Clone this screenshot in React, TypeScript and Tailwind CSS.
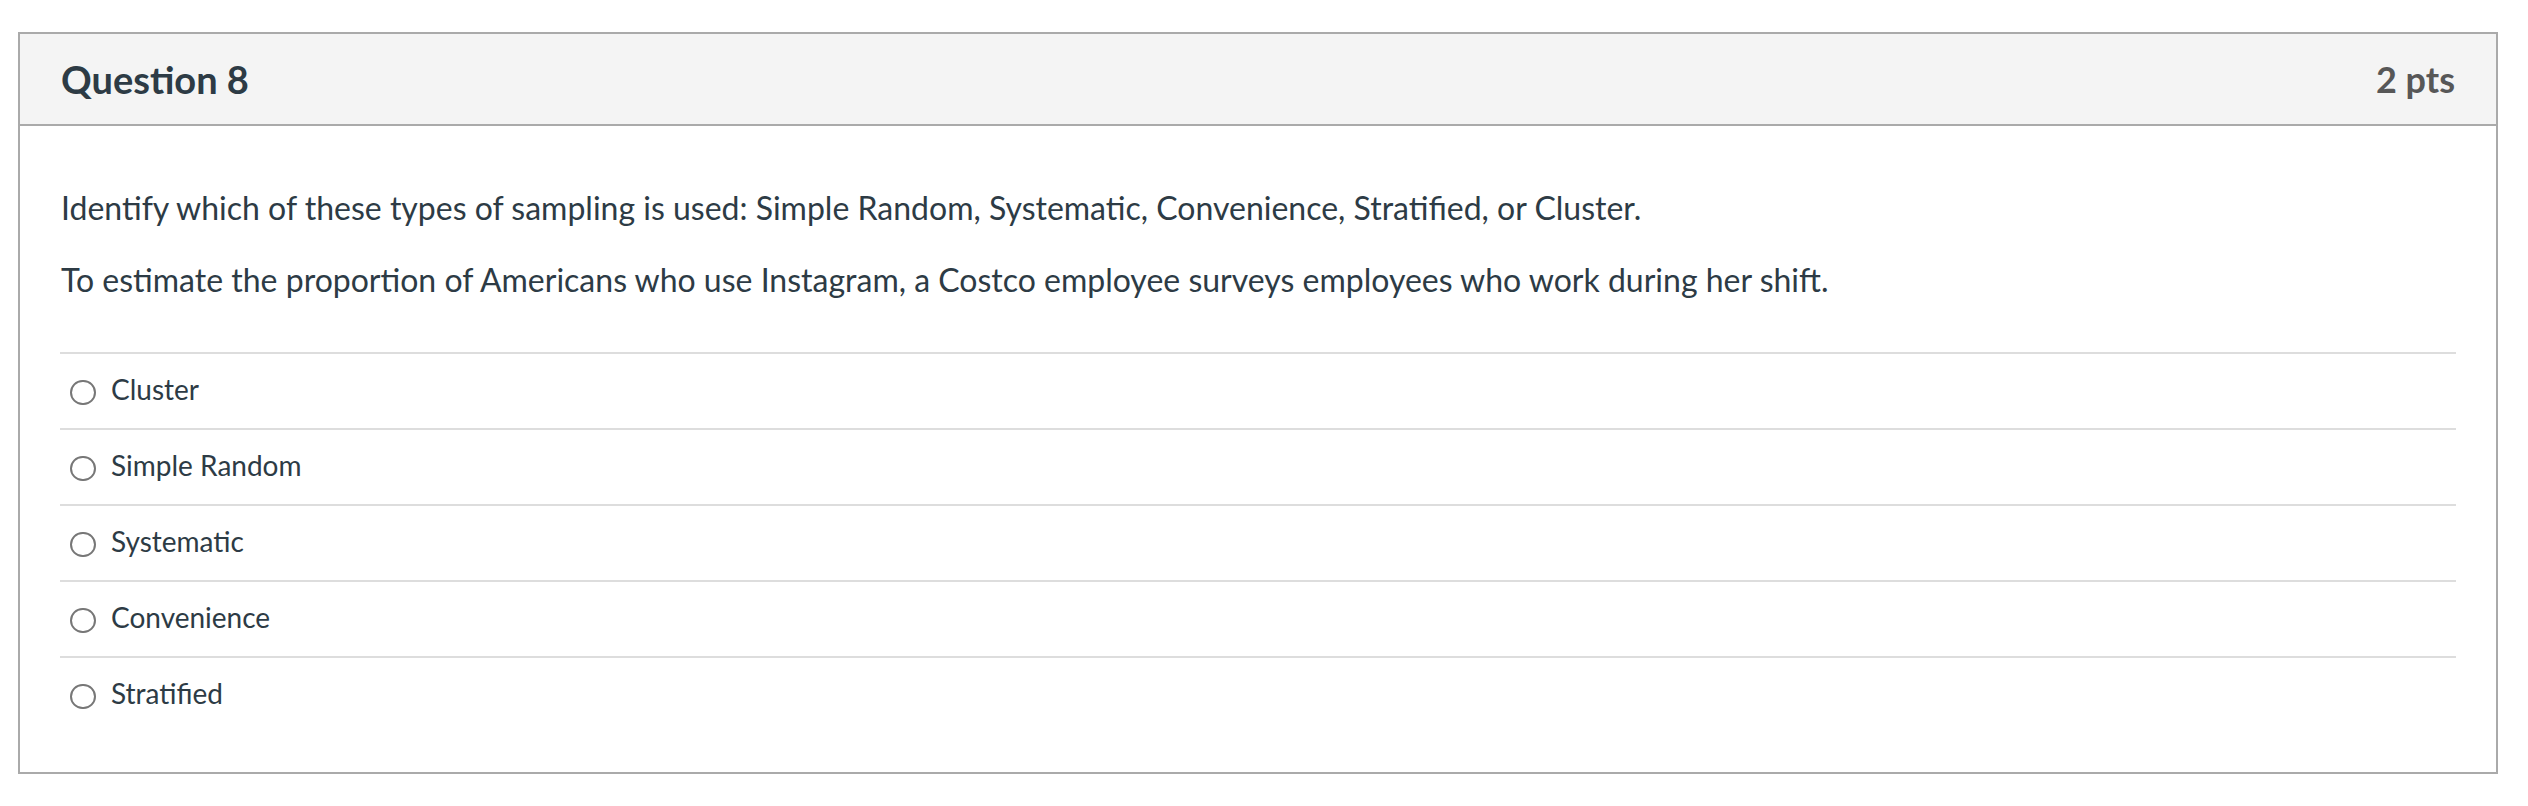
import { useState } from "react";

const options = ["Cluster", "Simple Random", "Systematic", "Convenience", "Stratified"];

export default function App() {
  const [selected, setSelected] = useState<string | null>(null);

  return (
    <div className="min-h-screen bg-white pt-[32px] pl-[18px] pr-[30px] font-['Lato',sans-serif] text-[#2d3b45]">
      <div className="border-2 border-[#aaaaaa]">
        {/* Header */}
        <div className="flex items-center justify-between h-[92px] px-[41px] bg-[#f4f4f4] border-b-2 border-[#aaaaaa]">
          <h2 className="text-[38px] leading-none font-bold">Question 8</h2>
          <span className="text-[36px] leading-none font-bold text-[#575757]">2 pts</span>
        </div>

        {/* Body */}
        <div className="px-[40px] pt-[58px] pb-[40px]">
          <div className="px-[1px] text-[32px] leading-[48px]">
            <p className="mb-[24px]">
              Identify which of these types of sampling is used: Simple Random, Systematic, Convenience, Stratified, or Cluster.
            </p>
            <p>
              To estimate the proportion of Americans who use Instagram, a Costco employee surveys employees who work during her shift.
            </p>
          </div>

          <div className="mt-[48px]">
            {options.map((opt) => (
              <label
                key={opt}
                className="flex items-center h-[76px] pb-[4px] border-t-2 border-[#dddddd] pl-[10px] cursor-pointer"
              >
                <input
                  type="radio"
                  name="q8"
                  checked={selected === opt}
                  onChange={() => setSelected(opt)}
                  className="sr-only"
                />
                <span className="mt-[6px] w-[26px] h-[25px] rounded-full border-2 border-[#777777] flex items-center justify-center">
                  {selected === opt && <span className="w-[13px] h-[13px] rounded-full bg-[#2d3b45]" />}
                </span>
                <span className="ml-[15px] text-[28px] leading-[42px]">{opt}</span>
              </label>
            ))}
          </div>
        </div>
      </div>
    </div>
  );
}
